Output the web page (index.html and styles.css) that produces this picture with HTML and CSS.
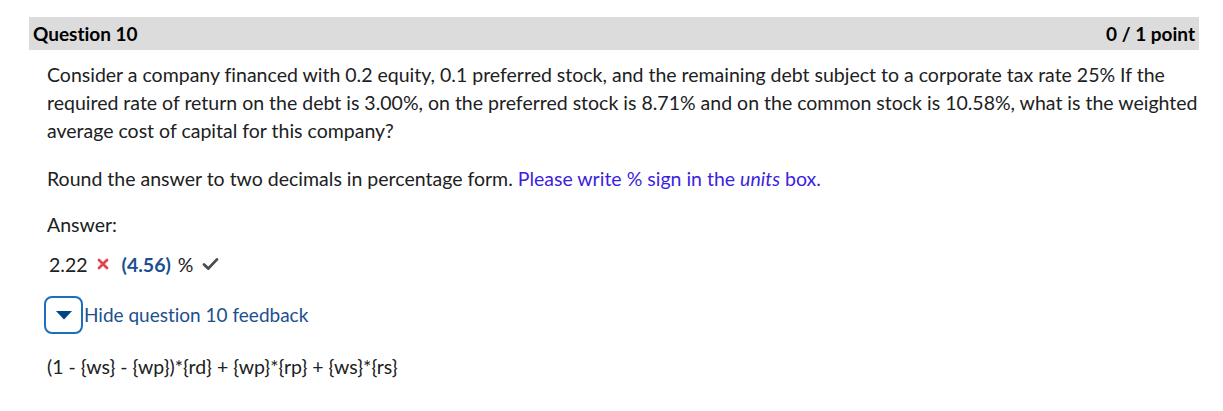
FILE: index.html
```html
<!DOCTYPE html>
<html>
<head>
<meta charset="utf-8">
<link rel="stylesheet" href="styles.css">
</head>
<body>
<div class="question">
  <div class="q-header">
    <span class="q-title">Question 10</span>
    <span class="q-points">0 / 1 point</span>
  </div>
  <div class="q-body">
    <p class="q-text">Consider a company financed with 0.2 equity, 0.1 preferred stock, and the remaining debt subject to a corporate tax rate 25% If the required rate of return on the debt is 3.00%, on the preferred stock is 8.71% and on the common stock is 10.58%, what is the weighted average cost of capital for this company?</p>
    <p class="q-round">Round the answer to two decimals in percentage form. <span class="note">Please write % sign in the <em>units</em> box.</span></p>
    <p class="q-answer-label">Answer:</p>
    <div class="answer-row">
      <span class="given">2.22</span>
      <svg class="icon-x" width="12" height="12" viewBox="0 0 12 12"><path d="M2 2 L10 10 M10 2 L2 10" stroke="#e0474c" stroke-width="2.8" stroke-linecap="round"/></svg>
      <span class="correct">(4.56)</span>
      <span class="unit">%</span>
      <svg class="icon-check" width="17" height="14" viewBox="0 0 17 14"><path d="M2 7.5 L6.2 11.6 L15 2.4" fill="none" stroke="#494c4e" stroke-width="2.8" stroke-linecap="round" stroke-linejoin="round"/></svg>
    </div>
    <div class="feedback-toggle">
      <span class="toggle-btn"><svg width="18" height="10" viewBox="0 0 18 10"><path d="M1 1 L17 1 L9 9.5 Z" fill="#004489"/></svg></span>
      <span class="toggle-label">Hide question 10 feedback</span>
    </div>
    <p class="formula">(1 - {ws} - {wp})*{rd} + {wp}*{rp} + {ws}*{rs}</p>
  </div>
</div>
</body>
</html>
```
FILE: styles.css
```css
html, body {
  margin: 0;
  padding: 0;
  background: #ffffff;
}
body {
  font-family: Lato, "Liberation Sans", sans-serif;
  color: #202122;
  font-size: 19.5px;
  font-variant-ligatures: none;
}
.question {
  padding: 17px 24px 0 29px;
}
.q-header {
  width: 1170px;
  height: 33px;
  background: #dcdcdc;
  display: flex;
  align-items: center;
  justify-content: space-between;
  box-sizing: border-box;
  padding: 0 4px 0 4px;
  font-weight: bold;
  font-size: 19px;
  color: #000000;
}
.q-body {
  padding-left: 18px;
}
p {
  margin: 0;
}
.q-text {
  margin-top: 11px;
  line-height: 28px;
  width: 1152px;
}
.q-round {
  margin-top: 20px;
  line-height: 28px;
}
.note {
  color: #3b1fe0;
}
.q-answer-label {
  margin-top: 18px;
  line-height: 28px;
}
.answer-row {
  margin-top: 11px;
  height: 28px;
  display: flex;
  align-items: center;
  padding-left: 2px;
}
.given {
  margin-right: 9px;
}
.icon-x {
  margin-right: 13px;
}
.correct {
  font-weight: bold;
  color: #1c4f8f;
  margin-right: 7px;
}
.unit {
  margin-right: 9px;
}
.feedback-toggle {
  margin-top: 18px;
  display: flex;
  align-items: center;
  margin-left: -3px;
}
.toggle-btn {
  width: 39px;
  height: 38px;
  box-sizing: border-box;
  border: 2px solid #1a6fbf;
  border-radius: 8px;
  display: flex;
  align-items: center;
  justify-content: center;
}
.toggle-btn svg {
  margin-top: -1px;
}
.toggle-label {
  color: #1c4f8f;
  margin-left: 1px;
  line-height: 28px;
  font-size: 19px;
}
.formula {
  margin-top: 19px;
  line-height: 28px;
}
```
